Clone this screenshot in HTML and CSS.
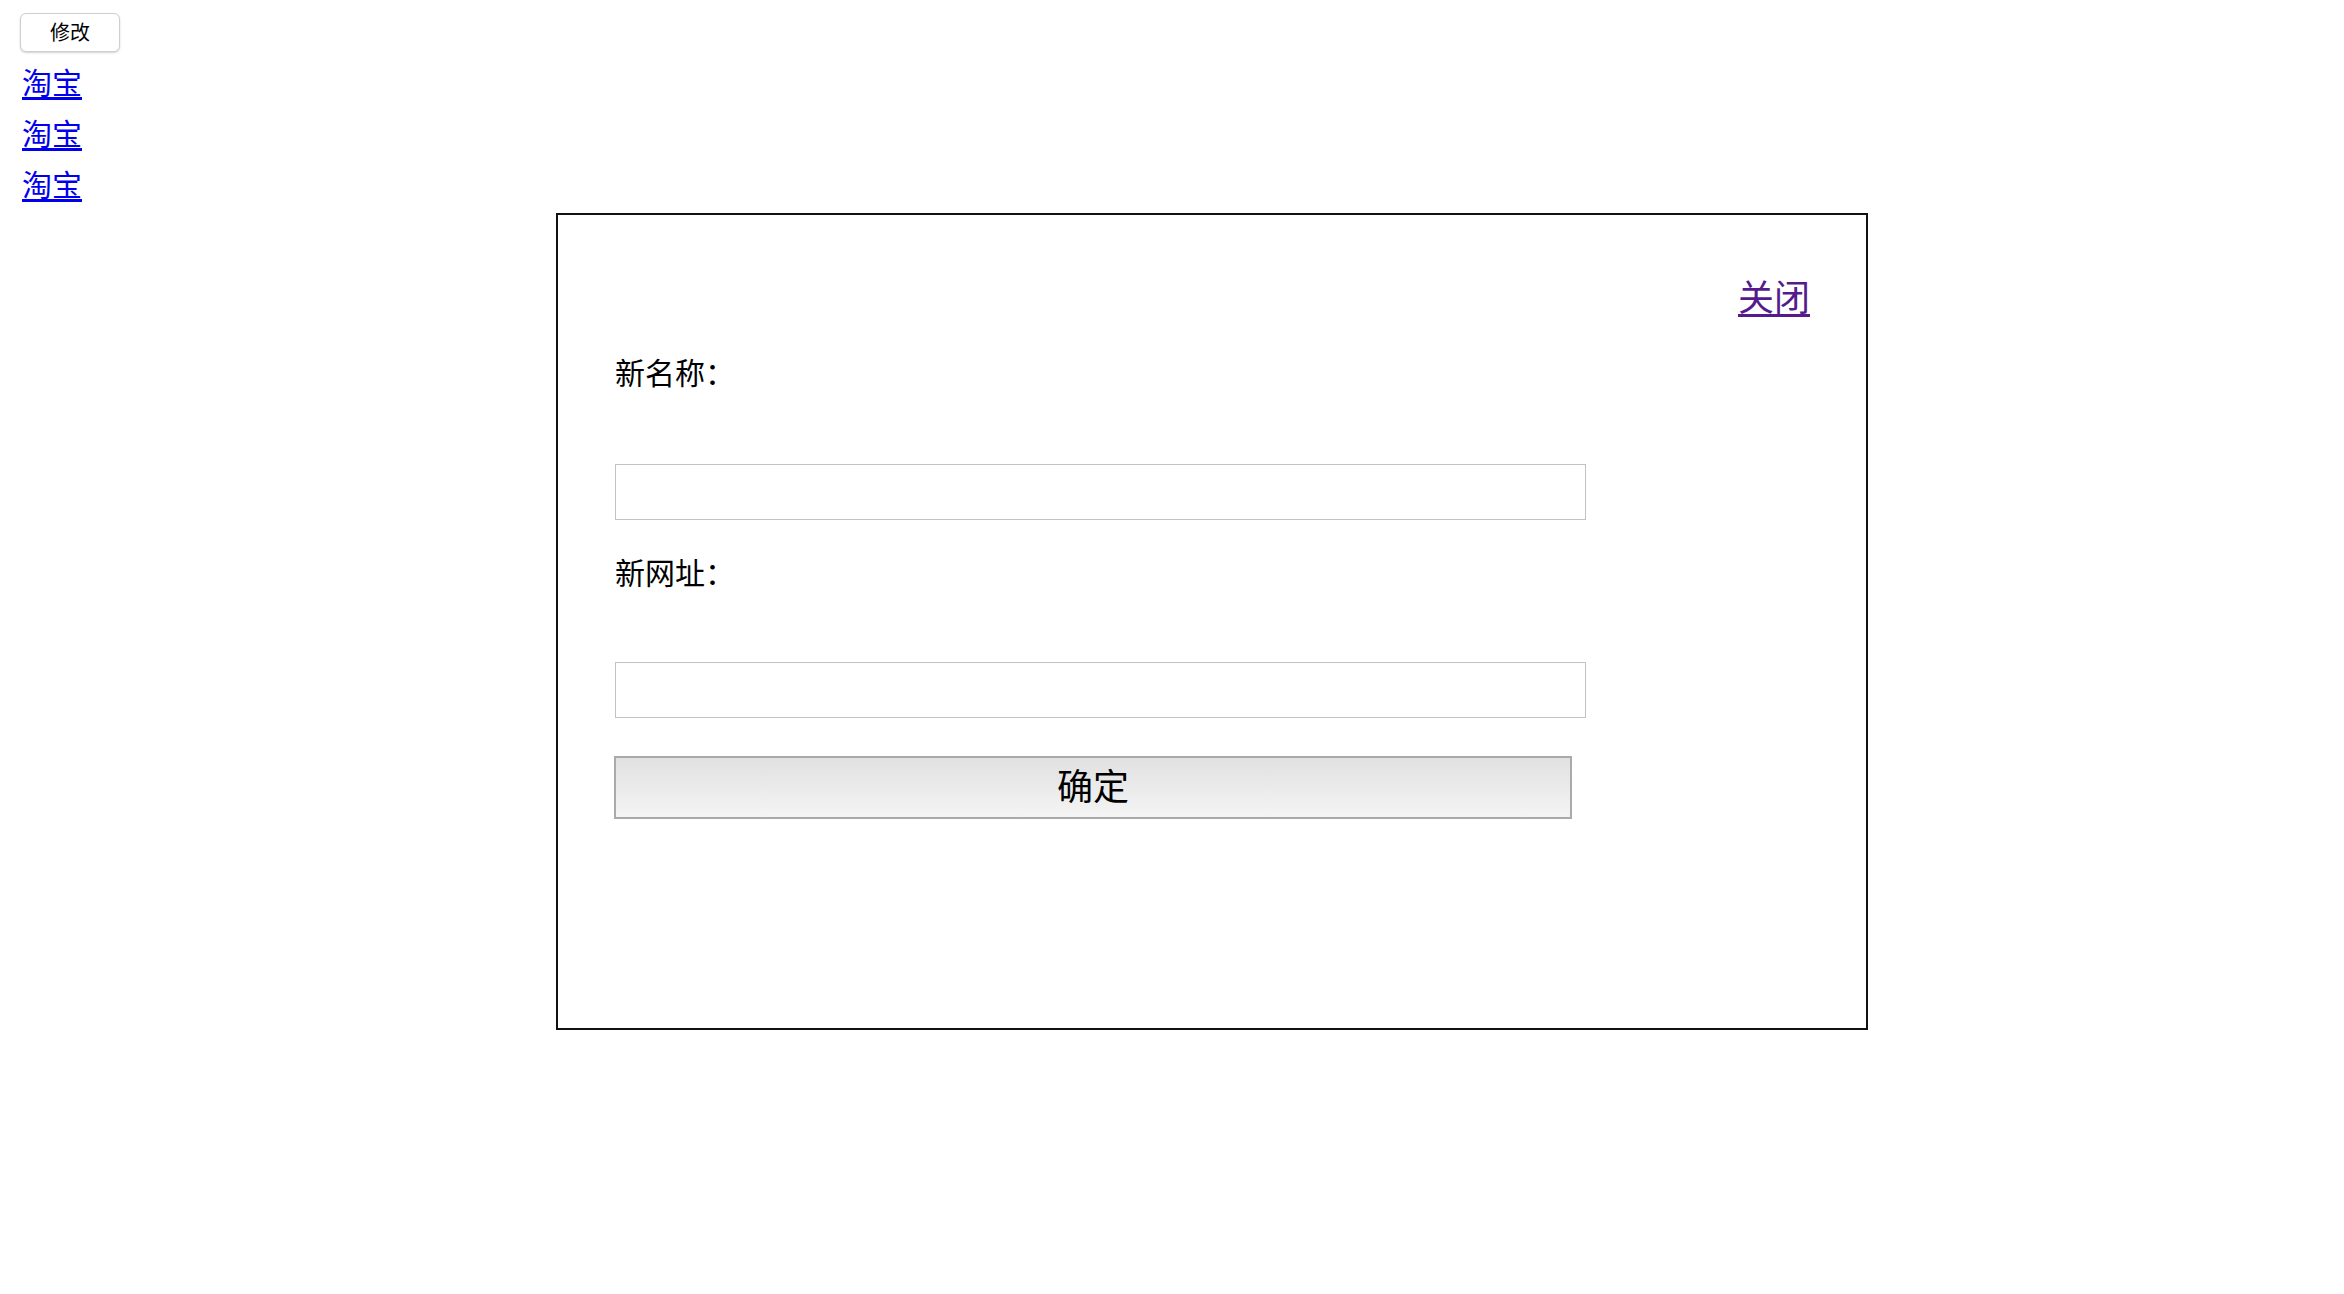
FILE: index.html
```html
<!DOCTYPE html>
<html lang="zh-CN">
<head>
<meta charset="utf-8">
<title>修改</title>
<link rel="stylesheet" href="styles.css">
</head>
<body>
<div class="page">
  <button class="edit-btn" type="button">修改</button>
  <ul class="links">
    <li><a href="#" class="link">淘宝</a></li>
    <li><a href="#" class="link">淘宝</a></li>
    <li><a href="#" class="link">淘宝</a></li>
  </ul>
</div>
<div class="modal">
  <div class="close-row"><a href="#" class="close">关闭</a></div>
  <div class="label label-first">新名称：</div>
  <input class="field field-first" type="text">
  <div class="label">新网址：</div>
  <input class="field field-second" type="text">
  <button class="ok-btn" type="button">确定</button>
</div>
</body>
</html>
```

FILE: styles.css
```css
html, body {
  margin: 0;
  padding: 0;
  background: #ffffff;
}
body {
  font-family: "Noto Sans CJK SC", "Noto Sans", sans-serif;
  color: #000;
}
.page {
  padding: 13px 0 0 20px;
}
.edit-btn {
  display: block;
  width: 100px;
  height: 39px;
  box-sizing: border-box;
  margin: 0;
  padding: 0 0 2px 0;
  border: 1px solid #cfcfcf;
  border-radius: 6px;
  background: #ffffff;
  box-shadow: 0 1px 2px rgba(0, 0, 0, 0.18);
  font-family: "Noto Sans CJK SC", sans-serif;
  font-size: 20px;
  line-height: 35px;
  color: #000;
}
.links {
  list-style: none;
  margin: 4px 0 0 2px;
  padding: 0;
}
.links li {
  font-size: 30px;
  line-height: 51px;
  height: 51px;
}
.link {
  color: #0000ee;
  text-decoration: underline;
  text-underline-offset: 3px;
}
.modal {
  position: absolute;
  left: 556px;
  top: 213px;
  width: 1312px;
  height: 817px;
  box-sizing: border-box;
  border: 2px solid #111111;
  background: #ffffff;
  padding: 55px 56px 0 57px;
}
.close-row {
  text-align: right;
  font-size: 36px;
  line-height: 50px;
  height: 50px;
}
.close {
  color: #551a8b;
  text-decoration: underline;
  text-underline-offset: 3px;
}
.label {
  font-size: 30px;
  line-height: 50px;
  height: 50px;
  margin-top: 26px;
}
.field {
  display: block;
  width: 971px;
  height: 56px;
  box-sizing: border-box;
  margin: 68px 0 0 0;
  padding: 0 8px;
  border: 1px solid #c2c2c2;
  border-radius: 0;
  background: #fff;
  font-size: 24px;
  outline: none;
}
.field-second {
  margin-top: 66px;
}
.ok-btn {
  display: block;
  width: 958px;
  height: 63px;
  box-sizing: border-box;
  margin: 38px 0 0 -1px;
  padding: 0 0 8px 0;
  border: 2px solid #aaaaaa;
  border-radius: 0;
  background: linear-gradient(to bottom, #e1e1e1, #f4f4f4);
  font-family: "Noto Sans CJK SC", sans-serif;
  font-size: 36px;
  line-height: 50px;
  color: #000;
}
```
